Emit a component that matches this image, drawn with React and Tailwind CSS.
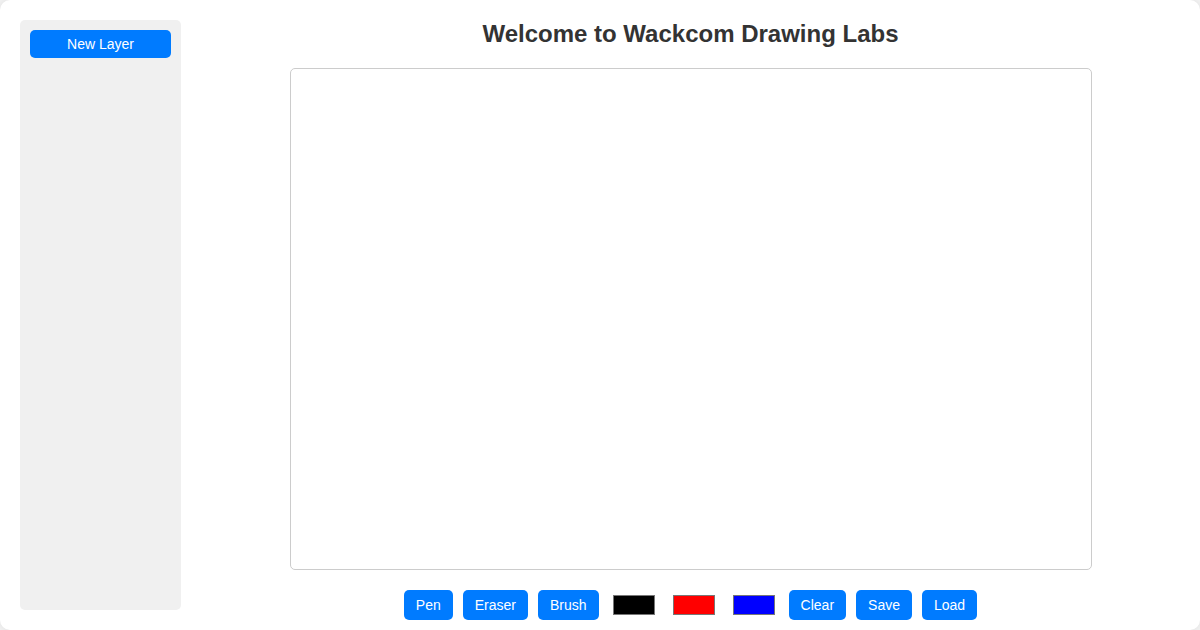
import React, { useState } from 'react';

const tools = ['Pen', 'Eraser', 'Brush'];
const colors = ['#000000', '#ff0000', '#0000ff'];
const actions = ['Clear', 'Save', 'Load'];

export default function App() {
  const [layers, setLayers] = useState([]);
  const [tool, setTool] = useState('Pen');
  const [color, setColor] = useState('#000000');

  const btn = 'mx-[5px] h-[30px] px-3 bg-[#007bff] text-white text-sm rounded-[5px]';

  return (
    <div className="w-[1200px] h-[630px] bg-[#f4f4f4] overflow-hidden font-['Liberation_Sans',Arial,sans-serif]">
      <div className="w-full h-full bg-white rounded-[10px] shadow-[0_0_10px_rgba(0,0,0,0.1)] p-5 flex">
        <div className="w-[161px] h-[590px] shrink-0 bg-[#f0f0f0] rounded-[5px] p-[10px]">
          <button
            onClick={() => setLayers((prev) => [...prev, prev.length + 1])}
            className="w-full h-7 bg-[#007bff] text-white text-sm rounded-[5px]"
          >
            New Layer
          </button>
        </div>

        <div className="flex-1 ml-5 flex flex-col items-center">
          <h1 className="text-2xl leading-7 font-bold text-[#333]">Welcome to Wackcom Drawing Labs</h1>
          <div className="mt-5 w-[802px] h-[502px] shrink-0 border border-[#ccc] rounded-[5px] bg-white" />

          <div className="mt-5 flex items-center">
            {tools.map((t) => (
              <button key={t} onClick={() => setTool(t)} className={btn}>
                {t}
              </button>
            ))}
            {colors.map((c) => (
              <button
                key={c}
                onClick={() => setColor(c)}
                aria-label={c}
                className="mx-[9px] w-[42px] h-5 border border-[#777]"
                style={{ backgroundColor: c }}
              />
            ))}
            {actions.map((a) => (
              <button key={a} className={btn}>
                {a}
              </button>
            ))}
          </div>
        </div>
      </div>
    </div>
  );
}
